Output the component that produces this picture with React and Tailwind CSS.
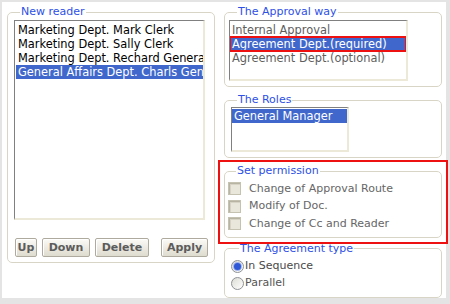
const ROW_FONT = "font-['DejaVu_Sans',Verdana,sans-serif]";

const readers = [
  "Marketing Dept. Mark Clerk",
  "Marketing Dept. Sally Clerk",
  "Marketing Dept. Rechard General Manager",
  "General Affairs Dept. Charls General Manager",
];

const permissions = [
  "Change of Approval Route",
  "Modify of Doc.",
  "Change of Cc and Reader",
];

function Legend({ children }) {
  return (
    <legend className="ml-[8px] px-[1px] leading-[14px] text-[11px] text-[#2d50e6]">
      {children}
    </legend>
  );
}

const listBox =
  "border-t border-l border-t-[#808080] border-l-[#808080] border-r-2 border-b-2 border-r-[#ece9d8] border-b-[#ece9d8] bg-white overflow-hidden text-[11.4px]";

function Button({ w, ml, children }) {
  return (
    <button
      className={`${w} ${ml} h-[19px] border border-[#aeab9e] rounded-[2px] bg-gradient-to-b from-[#fbfaf6] to-[#dedbcf] shadow-[inset_1px_1px_0_#fff] text-[11px] font-bold text-[#5c5c5c] leading-none`}
    >
      {children}
    </button>
  );
}

function CheckBox() {
  return (
    <span className="block w-[13px] h-[13px] border border-[#c5c2b2] bg-[#e9e7dc] shadow-[inset_1px_1px_0_#b7b4a4,inset_2px_2px_0_#d7d4c6]" />
  );
}

function Radio({ checked }) {
  return (
    <span className="flex items-center justify-center w-[13px] h-[13px] rounded-full border border-[#8e9295] bg-gradient-to-br from-[#dcdcd6] to-[#ffffff]">
      {checked && (
        <span className="block w-[7px] h-[7px] rounded-full bg-[#2f58d6] shadow-[0_0_0_1px_#9fb4f0]" />
      )}
    </span>
  );
}

export default function App() {
  return (
    <div className={`w-[450px] h-[304px] bg-[#e4e4e4] pt-[2px] pl-[2px] ${ROW_FONT} text-[11px]`}>
      <div className="w-[444px] h-[296px] bg-white flex items-start">
        {/* left */}
        <fieldset className="ml-[5px] mt-[3px] w-[207px] border border-[#d8d5c6] rounded-[5px] px-[6px] pb-[5px]">
          <legend className="ml-[6px] px-[1px] leading-[14px] text-[11px] text-[#2d50e6]">
            New reader
          </legend>
          <div className={`mt-[1px] w-[191px] h-[200px] pt-[2px] ${listBox}`}>
            {readers.map((r, i) => (
              <div
                key={r}
                className={`ml-[1px] pl-[2px] leading-[14px] whitespace-nowrap ${
                  i === 3 ? "bg-[#4068cc] text-white" : "text-black"
                }`}
              >
                {r}
              </div>
            ))}
          </div>
          <div className="mt-[18px] flex">
            <Button w="w-[22px]" ml="ml-[1px]">Up</Button>
            <Button w="w-[48px]" ml="ml-[5px]">Down</Button>
            <Button w="w-[54px]" ml="ml-[5px]">Delete</Button>
            <Button w="w-[47px]" ml="ml-[12px]">Apply</Button>
          </div>
        </fieldset>

        {/* right */}
        <div className="ml-[9px] mt-[3px] w-[218px] flex flex-col">
          <fieldset className="border border-[#d8d5c6] rounded-[5px] pl-[4px] pb-[5px]">
            <Legend>The Approval way</Legend>
            <div className={`mt-[1px] w-[179px] h-[61px] pt-[2px] ${listBox}`}>
              <div className="pl-[2px] leading-[14px] text-[#5e5e5e]">Internal Approval</div>
              <div className="pl-[2px] leading-[14px] bg-[#4068cc] text-white outline-2 outline-[#ee1111] -outline-offset-1">
                Agreement Dept.(required)
              </div>
              <div className="pl-[2px] leading-[14px] text-[#5e5e5e]">Agreement Dept.(optional)</div>
            </div>
          </fieldset>

          <fieldset className="mt-[6px] border border-[#d8d5c6] rounded-[5px] pl-[4px] pb-[5px]">
            <Legend>The Roles</Legend>
            <div className={`ml-[2px] w-[118px] h-[45px] pt-[1px] ${listBox}`}>
              <div className="pl-[2px] leading-[14px] bg-[#4068cc] text-white">General Manager</div>
            </div>
          </fieldset>

          <div className="mt-[2px] -ml-[6px] w-[230px] border-2 border-[#ee1111] pt-[2px] pl-[4px] pb-[4px]">
            <fieldset className="w-[218px] border border-[#d8d5c6] rounded-[5px] pl-[3px] pb-[4px]">
              <Legend>Set permission</Legend>
              <div className="mt-[2px]">
                {permissions.map((p) => (
                  <div key={p} className="h-[17.5px] flex items-center gap-[8px] text-[#666]">
                    <CheckBox />
                    <span>{p}</span>
                  </div>
                ))}
              </div>
            </fieldset>
          </div>

          <fieldset className="-mt-[2px] border border-[#d8d5c6] rounded-[5px] pl-[6px] pb-[5px]">
            <Legend>The Agreement type</Legend>
            <div className="mt-[2px] h-[17px] flex items-center gap-[1px] text-[#4a4a4a]">
              <Radio checked />
              <span>In Sequence</span>
            </div>
            <div className="h-[17px] flex items-center gap-[1px] text-[#555]">
              <Radio />
              <span>Parallel</span>
            </div>
          </fieldset>
        </div>
      </div>
    </div>
  );
}
